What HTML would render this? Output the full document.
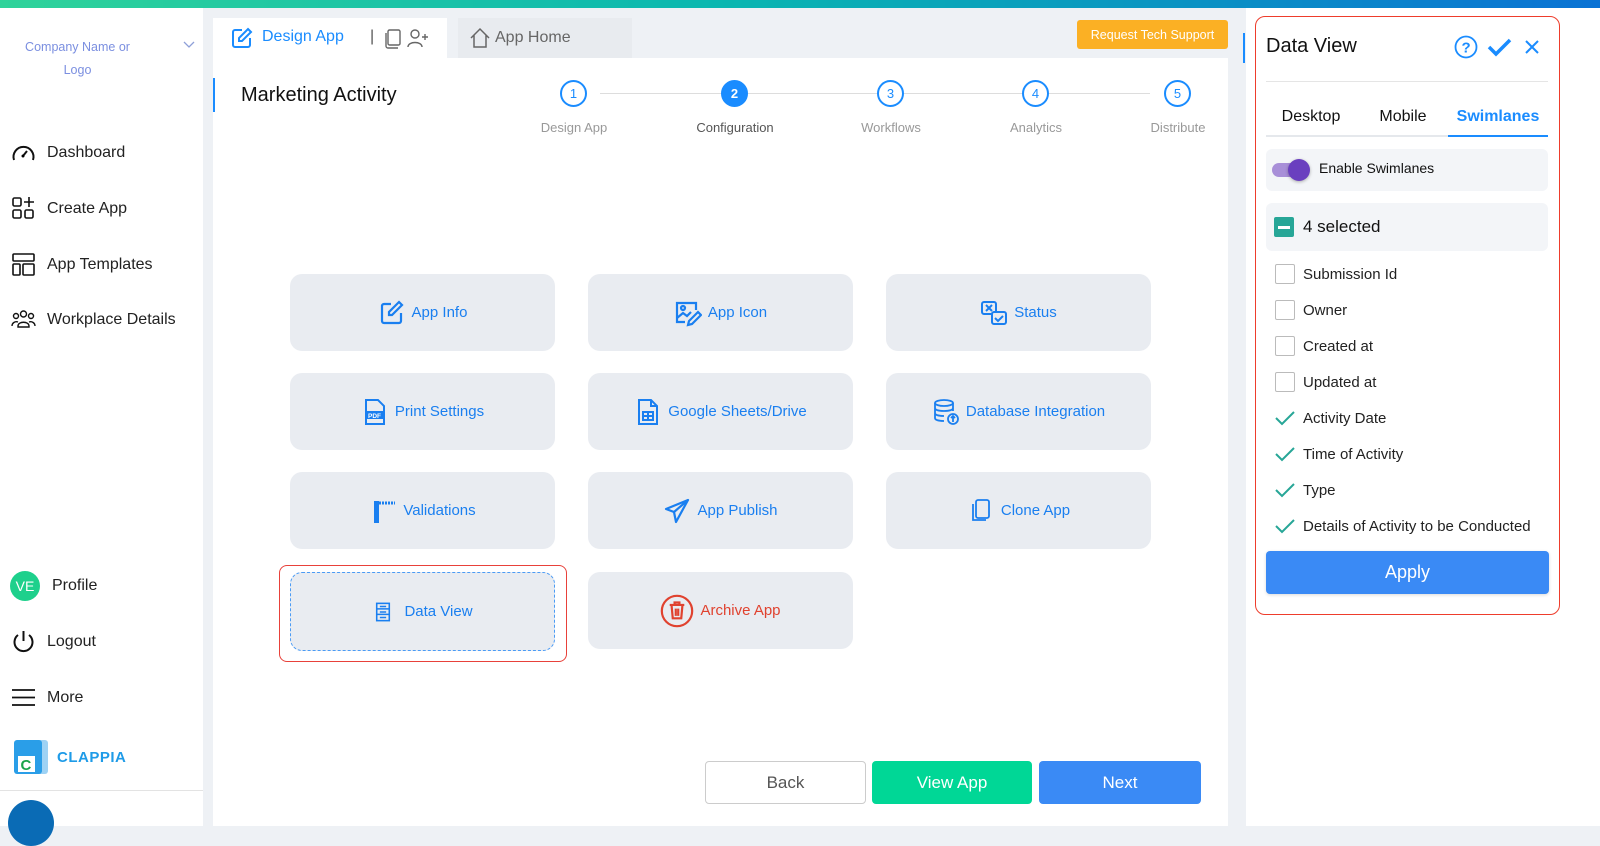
<!DOCTYPE html>
<html><head><meta charset="utf-8"><style>
*{margin:0;padding:0;box-sizing:border-box}
body{width:1600px;height:826px;overflow:hidden;background:#eef1f5;font-family:"Liberation Sans",sans-serif;position:relative;color:#222}
.a{position:absolute}
.top{left:0;top:0;width:1600px;height:8px;background:linear-gradient(90deg,#2fd39a,#0ab7b0 45%,#0a72d4)}
.side{left:0;top:8px;width:203px;height:818px;background:#fff}
.nav{position:absolute;left:10px;display:flex;align-items:center;font-size:16px;color:#222}
.nav svg{width:27px;height:27px;margin-right:10px}
.main{left:213px;top:58px;width:1015px;height:768px;background:#fff}
.tile{position:absolute;width:265px;height:77px;background:#e9ecf1;border-radius:12px;display:flex;align-items:center;justify-content:center;color:#1a7ff0;font-size:15px}
.tile svg{width:28px;height:28px;margin-right:6px}
.step{position:absolute;width:27px;height:27px;border:2px solid #1a8cff;border-radius:50%;color:#1a8cff;font-size:13px;display:flex;align-items:center;justify-content:center;background:#fff;top:80px}
.lbl{position:absolute;top:120px;font-size:13px;color:#999;transform:translateX(-50%);white-space:nowrap}
.btn{position:absolute;top:761px;height:43px;border-radius:4px;display:flex;align-items:center;justify-content:center;font-size:17px;color:#fff}
.item{position:absolute;left:1275px;display:flex;align-items:center;font-size:15px;color:#222}
.cb{width:20px;height:20px;border:1.5px solid #bbb;border-radius:2px;margin-right:8px;background:#fff}
.ck{width:20px;height:20px;margin-right:8px}
</style></head><body>
<div class="a top"></div>
<div class="a side"></div>
<div class="a" style="left:0;top:36px;width:155px;text-align:center;font-size:12.5px;color:#7b8fe0;line-height:23px">Company Name or<br>Logo</div>
<svg class="a" style="left:183px;top:41px" width="12" height="8" viewBox="0 0 12 8"><path d="M1 1l5 5 5-5" fill="none" stroke="#8fa0d8" stroke-width="1.3"/></svg>

<div class="nav" style="top:139px"><svg viewBox="0 0 27 27"><path d="M4 21A10 10 0 1 1 23 21" fill="none" stroke="#111" stroke-width="2"/><path d="M13 17l4-5" stroke="#111" stroke-width="2"/><circle cx="13" cy="17" r="1.5"/></svg>Dashboard</div>
<div class="nav" style="top:195px"><svg viewBox="0 0 27 27" fill="none" stroke="#111" stroke-width="1.6"><rect x="3" y="3" width="8" height="8" rx="1.5"/><rect x="3" y="15" width="8" height="8" rx="1.5"/><rect x="15" y="15" width="8" height="8" rx="1.5"/><path d="M19 2v10M14 7h10"/></svg>Create App</div>
<div class="nav" style="top:251px"><svg viewBox="0 0 27 27" fill="none" stroke="#111" stroke-width="1.6"><rect x="3" y="3" width="21" height="7" rx="1"/><rect x="3" y="13" width="7" height="11" rx="1"/><rect x="13" y="13" width="11" height="11" rx="1"/></svg>App Templates</div>
<div class="nav" style="top:306px"><svg viewBox="0 0 27 27" fill="none" stroke="#111" stroke-width="1.4"><circle cx="13.5" cy="8" r="3"/><circle cx="6" cy="10" r="2.5"/><circle cx="21" cy="10" r="2.5"/><path d="M8 20c0-5 11-5 11 0v1H8zM2 20c0-3 3-5 6-4M25 20c0-3-3-5-6-4"/></svg>Workplace Details</div>

<div class="nav" style="top:571px"><div style="width:30px;height:30px;border-radius:50%;background:#1ed08c;color:#fff;font-size:14px;display:flex;align-items:center;justify-content:center;margin-right:12px">VE</div>Profile</div>
<div class="nav" style="top:628px"><svg viewBox="0 0 27 27" fill="none" stroke="#111" stroke-width="2"><path d="M8 7a9 9 0 1 0 11 0"/><path d="M13.5 3v10"/></svg>Logout</div>
<div class="nav" style="top:684px"><svg viewBox="0 0 27 27" stroke="#111" stroke-width="1.8"><path d="M2 6h23M2 13.5h23M2 21h23"/></svg>More</div>
<svg class="a" style="left:14px;top:740px" width="34" height="34" viewBox="0 0 34 34"><rect x="6" y="0" width="28" height="34" rx="3" fill="#9ed2f4"/><rect x="0" y="0" width="28" height="34" rx="3" fill="#2a9ee8"/><rect x="4" y="16" width="17" height="16" fill="#fff"/><text x="6.5" y="30" font-family="Liberation Sans" font-weight="bold" font-size="15" fill="#1aa34a">C</text></svg>
<div class="a" style="left:57px;top:749px;font-size:15px;font-weight:bold;color:#1e9be8;letter-spacing:.5px">CLAPPIA</div>
<div class="a" style="left:0;top:790px;width:203px;height:1px;background:#e3e3e3"></div>
<div class="a" style="left:8px;top:800px;width:46px;height:46px;border-radius:50%;background:#0a6bb5"></div>

<!-- tabs -->
<div class="a" style="left:213px;top:18px;width:234px;height:40px;background:#fff"></div>
<svg class="a" style="left:231px;top:27px" width="22" height="22" viewBox="0 0 22 22" fill="none" stroke="#1a8cff" stroke-width="2"><path d="M11 3H4a2 2 0 0 0-2 2v13a2 2 0 0 0 2 2h13a2 2 0 0 0 2-2v-7"/><path d="M17 2l3 3-9 9H8v-3z"/></svg>
<div class="a" style="left:262px;top:28px;font-size:16px;color:#1a8cff">Design App</div>
<div class="a" style="left:370px;top:28px;font-size:16px;color:#555">|</div>
<svg class="a" style="left:384px;top:29px" width="18" height="20" viewBox="0 0 18 20" fill="none" stroke="#666" stroke-width="1.4"><rect x="4" y="1" width="12" height="15" rx="1.5"/><path d="M2 4v13a2 2 0 0 0 2 2h10"/></svg>
<svg class="a" style="left:407px;top:28px" width="22" height="20" viewBox="0 0 22 20" fill="none" stroke="#666" stroke-width="1.4"><circle cx="8" cy="6" r="4"/><path d="M1 19c0-6 14-6 14 0M18 6v6M15 9h6"/></svg>
<div class="a" style="left:458px;top:18px;width:174px;height:40px;background:#e8ebef"></div>
<svg class="a" style="left:469px;top:27px" width="22" height="22" viewBox="0 0 22 22" fill="none" stroke="#666" stroke-width="1.5"><path d="M2 11L11 2l9 9M5 8v12h12V8"/></svg>
<div class="a" style="left:495px;top:29px;font-size:16px;color:#666">App Home</div>
<div class="a" style="left:1077px;top:20px;width:151px;height:29px;background:#fbb024;border-radius:3px;color:#fff;font-size:12.5px;display:flex;align-items:center;justify-content:center">Request Tech Support</div>

<div class="a main"></div>
<div class="a" style="left:213px;top:78px;width:2px;height:34px;background:#1a8cff"></div>
<div class="a" style="left:241px;top:84px;font-size:20px;color:#111">Marketing Activity</div>

<div class="a" style="left:600px;top:93px;width:550px;height:1px;background:#ddd"></div>
<div class="step" style="left:560px">1</div>
<div class="step" style="left:721px;background:#1a8cff;color:#fff;font-weight:bold">2</div>
<div class="step" style="left:877px">3</div>
<div class="step" style="left:1022px">4</div>
<div class="step" style="left:1164px">5</div>
<div class="lbl" style="left:574px">Design App</div>
<div class="lbl" style="left:735px;color:#555">Configuration</div>
<div class="lbl" style="left:891px">Workflows</div>
<div class="lbl" style="left:1036px">Analytics</div>
<div class="lbl" style="left:1178px">Distribute</div>

<div class="tile" style="left:290px;top:274px"><svg viewBox="0 0 28 28" fill="none" stroke="#1a7ff0" stroke-width="2.2"><path d="M13 5H6a2 2 0 0 0-2 2v15a2 2 0 0 0 2 2h15a2 2 0 0 0 2-2v-8"/><path d="M21 3l3 3-10 10h-3v-3z"/></svg>App Info</div>
<div class="tile" style="left:588px;top:274px"><svg viewBox="0 0 28 28" fill="none" stroke="#1a7ff0" stroke-width="2.2"><path d="M22 11V4H3v19h8"/><circle cx="9" cy="9" r="2"/><path d="M3 19l6-5 4 3 4-4"/><path d="M24 13l3 3-9 9-4 1 1-4z"/></svg>App Icon</div>
<div class="tile" style="left:886px;top:274px"><svg viewBox="0 0 28 28" fill="none" stroke="#1a7ff0" stroke-width="2"><rect x="2" y="3" width="14" height="12" rx="2"/><path d="M6 6l6 6M12 6l-6 6"/><rect x="12" y="13" width="14" height="12" rx="2" fill="#e9ecf1"/><path d="M15 19l3 3 5-5"/></svg>Status</div>
<div class="tile" style="left:290px;top:373px"><svg viewBox="0 0 28 28"><path d="M5 2h12l6 6v18H5z" fill="none" stroke="#1a7ff0" stroke-width="2"/><rect x="5" y="13" width="18" height="8" fill="#1a7ff0"/><text x="7" y="20" font-size="6.5" fill="#fff" font-family="Liberation Sans" font-weight="bold">PDF</text></svg>Print Settings</div>
<div class="tile" style="left:588px;top:373px"><svg viewBox="0 0 28 28" fill="none" stroke="#1a7ff0" stroke-width="2"><path d="M5 2h12l6 6v18H5z"/><path d="M17 2v6h6"/><rect x="9" y="14" width="10" height="8"/><path d="M9 18h10M14 14v8"/></svg>Google Sheets/Drive</div>
<div class="tile" style="left:886px;top:373px"><svg viewBox="0 0 28 28" fill="none" stroke="#1a7ff0" stroke-width="1.8"><ellipse cx="12" cy="5" rx="9" ry="3"/><path d="M3 5v15c0 2 4 3 9 3M21 5v8M3 10c0 2 4 3 9 3s9-1 9-3M3 15c0 2 4 3 9 3"/><circle cx="21" cy="21" r="5" fill="#e9ecf1"/><path d="M21 24v-6M19 20l2-2 2 2"/></svg>Database Integration</div>
<div class="tile" style="left:290px;top:472px"><svg viewBox="0 0 28 28"><rect x="5" y="4" width="5" height="22" fill="#1a7ff0"/><path d="M10 6h16" stroke="#1a7ff0" stroke-width="3" stroke-dasharray="2 1"/></svg>Validations</div>
<div class="tile" style="left:588px;top:472px"><svg viewBox="0 0 28 28" fill="none" stroke="#1a7ff0" stroke-width="2.2" stroke-linejoin="round"><path d="M25 3L3 12l8 3 2 10z"/><path d="M11 15L25 3"/></svg>App Publish</div>
<div class="tile" style="left:886px;top:472px"><svg viewBox="0 0 28 28" fill="none" stroke="#1a7ff0" stroke-width="1.8"><rect x="9" y="3" width="13" height="18" rx="2"/><path d="M6 7v16h13"/></svg>Clone App</div>

<div class="a" style="left:279px;top:565px;width:288px;height:97px;border:1.5px solid #e8413a;border-radius:8px"></div>
<div class="tile" style="left:290px;top:572px;height:79px;border:1px dashed #4a9bf5"><svg viewBox="0 0 28 28" style="width:22px;height:22px;margin-right:10px" fill="none" stroke="#1a7ff0" stroke-width="2"><rect x="6" y="3" width="16" height="22"/><path d="M6 10h16M6 17h16M10 7h8M10 14h8M10 21h8"/></svg>Data View</div>
<div class="tile" style="left:588px;top:572px;color:#e0422f"><svg viewBox="0 0 28 28" style="width:34px;height:34px" fill="none" stroke="#e0422f" stroke-width="1.8"><circle cx="14" cy="14" r="12.5"/><path d="M8 9h12M12 9V7h4v2M9.5 9l1 11h7l1-11M13 12v6M15 12v6"/></svg>Archive App</div>

<div class="btn" style="left:705px;width:161px;background:#fff;border:1px solid #ccc;color:#555">Back</div>
<div class="btn" style="left:872px;width:160px;background:#00d796">View App</div>
<div class="btn" style="left:1039px;width:162px;background:#3a8af5">Next</div>

<!-- right panel -->
<div class="a" style="left:1246px;top:8px;width:354px;height:818px;background:#fff"></div>
<div class="a" style="left:1243px;top:33px;width:2px;height:30px;background:#1a8cff"></div>
<div class="a" style="left:1255px;top:16px;width:305px;height:599px;border:1.5px solid #ee3d2c;border-radius:10px"></div>
<div class="a" style="left:1266px;top:35px;font-size:20px;color:#111">Data View</div>
<svg class="a" style="left:1454px;top:35px" width="24" height="24" viewBox="0 0 24 24"><circle cx="12" cy="12" r="10.5" fill="none" stroke="#1a8cff" stroke-width="1.8"/><text x="7.5" y="17.5" font-size="15" font-weight="bold" fill="#1a8cff" font-family="Liberation Sans">?</text></svg>
<svg class="a" style="left:1487px;top:37px" width="25" height="20" viewBox="0 0 25 20"><path d="M2 10l7 7L23 3" fill="none" stroke="#1a8cff" stroke-width="3.5"/></svg>
<svg class="a" style="left:1525px;top:40px" width="14" height="14" viewBox="0 0 14 14"><path d="M1 1l12 12M13 1L1 13" stroke="#1a8cff" stroke-width="2"/></svg>
<div class="a" style="left:1266px;top:81px;width:282px;height:1px;background:#e5e5e5"></div>
<div class="a" style="left:1266px;top:108px;width:90px;text-align:center;font-size:16px;color:#111">Desktop</div>
<div class="a" style="left:1358px;top:108px;width:90px;text-align:center;font-size:16px;color:#111">Mobile</div>
<div class="a" style="left:1448px;top:108px;width:100px;text-align:center;font-size:16px;color:#1a8cff;font-weight:bold">Swimlanes</div>
<div class="a" style="left:1266px;top:135px;width:282px;height:2px;background:#e5e8ec"></div>
<div class="a" style="left:1448px;top:135px;width:100px;height:2px;background:#1a8cff"></div>

<div class="a" style="left:1266px;top:149px;width:282px;height:42px;background:#f3f5f8;border-radius:6px"></div>
<div class="a" style="left:1272px;top:163px;width:34px;height:14px;border-radius:7px;background:#a88fd8"></div>
<div class="a" style="left:1288px;top:159px;width:22px;height:22px;border-radius:50%;background:#6a3fbf;box-shadow:0 1px 3px rgba(0,0,0,.3)"></div>
<div class="a" style="left:1319px;top:160px;font-size:14px;color:#111">Enable Swimlanes</div>

<div class="a" style="left:1266px;top:203px;width:282px;height:48px;background:#f3f5f8;border-radius:6px"></div>
<div class="a" style="left:1274px;top:217px;width:20px;height:20px;border-radius:2px;background:#27a697"></div>
<div class="a" style="left:1278px;top:226px;width:12px;height:2.5px;background:#fff"></div>
<div class="a" style="left:1303px;top:217px;font-size:17px;color:#111">4 selected</div>

<div class="item" style="top:264px"><div class="cb"></div>Submission Id</div>
<div class="item" style="top:300px"><div class="cb"></div>Owner</div>
<div class="item" style="top:336px"><div class="cb"></div>Created at</div>
<div class="item" style="top:372px"><div class="cb"></div>Updated at</div>
<div class="item" style="top:408px"><svg class="ck" viewBox="0 0 20 20"><path d="M1 10l6 6L19 4" fill="none" stroke="#27a697" stroke-width="2"/></svg>Activity Date</div>
<div class="item" style="top:444px"><svg class="ck" viewBox="0 0 20 20"><path d="M1 10l6 6L19 4" fill="none" stroke="#27a697" stroke-width="2"/></svg>Time of Activity</div>
<div class="item" style="top:480px"><svg class="ck" viewBox="0 0 20 20"><path d="M1 10l6 6L19 4" fill="none" stroke="#27a697" stroke-width="2"/></svg>Type</div>
<div class="item" style="top:516px"><svg class="ck" viewBox="0 0 20 20"><path d="M1 10l6 6L19 4" fill="none" stroke="#27a697" stroke-width="2"/></svg>Details of Activity to be Conducted</div>
<div class="a" style="left:1266px;top:551px;width:283px;height:43px;background:#3a8af5;border-radius:4px;color:#fff;font-size:18px;display:flex;align-items:center;justify-content:center;box-shadow:0 1px 3px rgba(0,0,0,.15)">Apply</div>
</body></html>
